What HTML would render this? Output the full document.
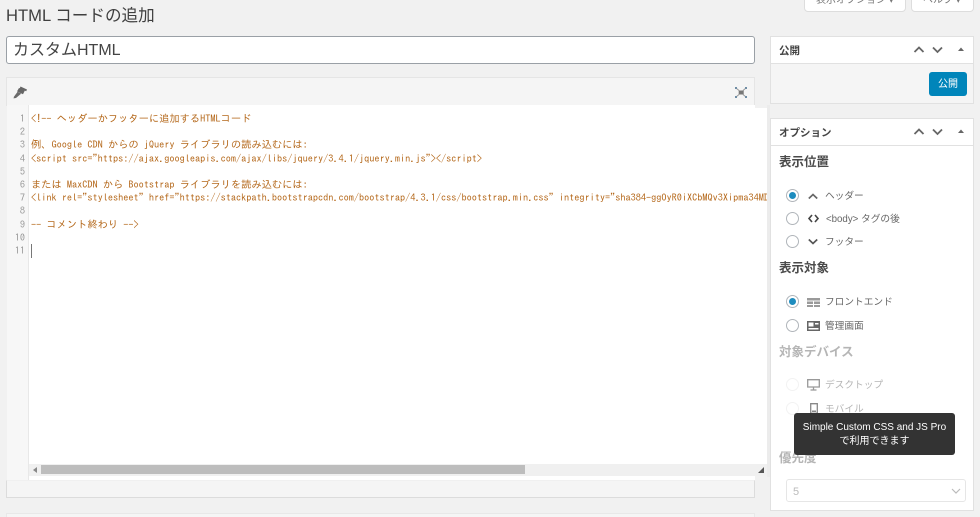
<!DOCTYPE html>
<html lang="ja">
<head>
<meta charset="utf-8">
<style>
html,body{margin:0;padding:0}
body{width:980px;height:517px;overflow:hidden;background:#f1f1f1;position:relative;font-family:"Liberation Sans","Noto Sans CJK JP",sans-serif;color:#444}
#w{position:absolute;left:0;top:0;width:980px;height:517px;overflow:hidden;background:#f1f1f1;filter:blur(.3px)}
.a{position:absolute;box-sizing:border-box;white-space:nowrap}
.code{position:absolute;left:31px;font:10.25px/13px IPAGothic,"Liberation Mono",monospace;color:#b5691c;white-space:pre}
.num{position:absolute;left:7px;width:18px;text-align:right;font:10.25px/13px IPAGothic,"Liberation Mono",monospace;color:#999}
.h{font-weight:bold;font-size:12.5px;color:#4a4a4a;line-height:18px}
.lab{font-size:9.7px;color:#666;line-height:14px}
.radio{position:absolute;box-sizing:border-box;width:13px;height:13px;border-radius:50%;border:1px solid #b0b5ba;background:#fff}
.radio.on:after{content:"";position:absolute;left:2px;top:2px;width:7px;height:7px;border-radius:50%;background:#1e8cbe}
svg{position:absolute;overflow:visible}
</style>
</head>
<body>
<div id="w">
<!-- top-right tabs -->
<div class="a" style="left:804px;top:-8px;width:102px;height:20px;background:#fff;border:1px solid #ddd;border-radius:0 0 4px 4px;font-size:10px;line-height:16px;color:#777;padding-left:11px">表示オプション ▾</div>
<div class="a" style="left:911px;top:-8px;width:63px;height:20px;background:#fff;border:1px solid #ddd;border-radius:0 0 4px 4px;font-size:10px;line-height:16px;color:#777;padding-left:11px">ヘルプ ▾</div>

<div class="a" style="left:6px;top:4px;font-size:16.6px;line-height:24px;color:#3f3f3f">HTML コードの追加</div>

<div class="a" style="left:6px;top:36px;width:749px;height:28px;background:#fff;border:1px solid #9aa0a6;border-radius:3px;font-size:16px;line-height:27px;padding-left:6px;color:#444">カスタムHTML</div>

<!-- editor toolbar -->
<div class="a" style="left:6px;top:77px;width:749px;height:29px;background:#f5f5f5;border:1px solid #e5e5e5"></div>
<svg style="left:13px;top:85px" width="14" height="14" viewBox="0 0 14 14"><path d="M7.5 1.5L14 4.5L13.2 6.2L11.8 5.6L10 9.2L4 6.4L6 3L6.8 3.2Z" fill="#666"/><path d="M4.6 6.8L8.2 8.6L3 13L0.5 13.4L1 11.6Z" fill="#6b6b6b"/></svg>
<svg style="left:735px;top:87px" width="12" height="11" viewBox="0 0 12 11"><rect x="3.7" y="3.5" width="5" height="4" fill="#777"/><path d="M1 1L4 3.5M11 1L8 3.5M1 10L4 7.5M11 10L8 7.5" stroke="#9a9a9a" stroke-width="1"/><rect x="0" y="0" width="2" height="2" fill="#6f8da5"/><rect x="10" y="0" width="2" height="2" fill="#6f8da5"/><rect x="0" y="9" width="2" height="2" fill="#6f8da5"/><rect x="10" y="9" width="2" height="2" fill="#6f8da5"/></svg>

<!-- editor -->
<div class="a" style="left:7px;top:105px;width:22px;height:375px;background:#f7f7f7;border-right:1px solid #e8e8e8"></div>
<div class="a" style="left:29px;top:105px;width:738px;height:371px;background:#fff"></div>
<div class="a" style="left:29px;top:476px;width:726px;height:4px;background:#fff"></div>
<div class="a" style="left:755px;top:105px;width:12px;height:3px;background:#f1f1f1"></div>
<div class="a" style="left:767px;top:105px;width:3px;height:372px;background:#ececec"></div>

<div class="num" style="top:113px">1</div><div class="num" style="top:126px">2</div><div class="num" style="top:139px">3</div><div class="num" style="top:153px">4</div><div class="num" style="top:166px">5</div><div class="num" style="top:179px">6</div><div class="num" style="top:192px">7</div><div class="num" style="top:205px">8</div><div class="num" style="top:219px">9</div><div class="num" style="top:232px">10</div><div class="num" style="top:245px">11</div>

<div class="a" style="left:29px;top:105px;width:738px;height:150px;overflow:hidden">
<div class="code" style="left:2px;top:8px">&lt;!-- ヘッダーかフッターに追加するHTMLコード</div>
<div class="code" style="left:2px;top:34px">例、Google CDN からの jQuery ライブラリの読み込むには:</div>
<div class="code" style="left:2px;top:48px">&lt;script src="https://ajax.googleapis.com/ajax/libs/jquery/3.4.1/jquery.min.js"&gt;&lt;/script&gt;</div>
<div class="code" style="left:2px;top:74px">または MaxCDN から Bootstrap ライブラリを読み込むには:</div>
<div class="code" style="left:2px;top:87px">&lt;link rel="stylesheet" href="https://stackpath.bootstrapcdn.com/bootstrap/4.3.1/css/bootstrap.min.css" integrity="sha384-ggOyR0iXCbMQv3Xipma34MD+dH/1fQ784/j6cY/iJTQUOhcWr7x9JvoRxT2MZw1T"</div>
<div class="code" style="left:2px;top:114px">-- コメント終わり --&gt;</div>
</div>
<div class="a" style="left:31px;top:244px;width:1.2px;height:14px;background:#777"></div>

<!-- scrollbar -->
<div class="a" style="left:29px;top:464px;width:738px;height:12px;background:#f0f0f0"></div>
<div class="a" style="left:41px;top:465px;width:484px;height:9px;background:#bdbdbd"></div>
<svg style="left:33px;top:467px" width="4" height="6" viewBox="0 0 4 6"><path d="M4 0L0 3L4 6Z" fill="#888"/></svg>
<svg style="left:758px;top:467px" width="6" height="6" viewBox="0 0 6 6"><path d="M6 0V6H0Z" fill="#555"/></svg>

<!-- editor footer -->
<div class="a" style="left:6px;top:480px;width:749px;height:18px;background:#f5f5f5;border:1px solid #dcdcdc;border-top-color:#f0f0f0"></div>
<!-- next box -->
<div class="a" style="left:6px;top:513px;width:749px;height:10px;background:#f5f5f5;border:1px solid #e8e8e8"></div>

<!-- publish box -->
<div class="a" style="left:770px;top:36px;width:204px;height:68px;background:#f5f5f5;border:1px solid #e1e1e1"></div>
<div class="a" style="left:771px;top:37px;width:202px;height:27px;background:#fff;border-bottom:1px solid #e1e1e1"></div>
<div class="a" style="left:779px;top:43px;font-size:10.5px;font-weight:bold;line-height:16px;color:#444">公開</div>
<svg style="left:914px;top:46px" width="60" height="8" viewBox="0 0 60 8"><path d="M0.5 6L5 1.5L9.5 6M19 1.5L23.5 6L28 1.5" fill="none" stroke="#666" stroke-width="1.8"/><path d="M44 5L47 1.5L50 5Z" fill="#666"/></svg>
<div class="a" style="left:929px;top:72px;width:38px;height:24px;background:#0085ba;border-radius:3px;color:#fff;font-size:10px;line-height:25px;text-align:center">公開</div>

<!-- options box -->
<div class="a" style="left:770px;top:118px;width:204px;height:393px;background:#fff;border:1px solid #e1e1e1"></div>
<div class="a" style="left:771px;top:145px;width:202px;height:1px;background:#e1e1e1"></div>
<div class="a" style="left:779px;top:125px;font-size:10.5px;font-weight:bold;line-height:16px;color:#444">オプション</div>
<svg style="left:914px;top:128px" width="60" height="8" viewBox="0 0 60 8"><path d="M0.5 6L5 1.5L9.5 6M19 1.5L23.5 6L28 1.5" fill="none" stroke="#666" stroke-width="1.8"/><path d="M44 5L47 1.5L50 5Z" fill="#666"/></svg>

<div class="a h" style="left:779px;top:153px">表示位置</div>
<div class="radio on" style="left:786px;top:189px"></div>
<svg style="left:808px;top:193px" width="10" height="7" viewBox="0 0 10 7"><path d="M0.8 5.5L5 1.5L9.2 5.5" fill="none" stroke="#666" stroke-width="1.7"/></svg>
<div class="a lab" style="left:825px;top:190px">ヘッダー</div>

<div class="radio" style="left:786px;top:212px"></div>
<svg style="left:808px;top:214px" width="11" height="9" viewBox="0 0 11 9"><path d="M4 1L1 4.5L4 8M7 1L10 4.5L7 8" fill="none" stroke="#444" stroke-width="1.6"/></svg>
<div class="a lab" style="left:826px;top:213px">&lt;body&gt; タグの後</div>

<div class="radio" style="left:786px;top:235px"></div>
<svg style="left:808px;top:238px" width="10" height="7" viewBox="0 0 10 7"><path d="M0.8 1.5L5 5.5L9.2 1.5" fill="none" stroke="#555" stroke-width="1.7"/></svg>
<div class="a lab" style="left:825px;top:236px">フッター</div>

<div class="a h" style="left:779px;top:259px">表示対象</div>
<div class="radio on" style="left:786px;top:295px"></div>
<svg style="left:807px;top:298px" width="13" height="9" viewBox="0 0 13 9"><path d="M0 0H13V2.5H0ZM0 3.5H6V6H0ZM7 3.5H13V6H7ZM0 7H6V9H0ZM7 7H13V9H7Z" fill="#9a9a9a"/></svg>
<div class="a lab" style="left:825px;top:296px">フロントエンド</div>

<div class="radio" style="left:786px;top:319px"></div>
<svg style="left:807px;top:321px" width="13" height="10" viewBox="0 0 13 10"><path d="M0 0H13V10H0ZM1.5 1.5V5.5H6.5V1.5ZM8 2V3.5H11.5V2ZM1.5 7V8.5H11.5V7Z" fill="#666" fill-rule="evenodd"/></svg>
<div class="a lab" style="left:825px;top:320px">管理画面</div>

<div class="a h" style="left:779px;top:343px;color:#b5b5b5">対象デバイス</div>
<div class="radio" style="left:786px;top:378px;border-color:#f2f2f2"></div>
<svg style="left:807px;top:379px" width="13" height="12" viewBox="0 0 13 12"><path d="M0.7 0.7H12.3V8H0.7ZM6.5 8V10.5M3.5 11H9.5" fill="none" stroke="#999" stroke-width="1.3"/></svg>
<div class="a lab" style="left:825px;top:379px;color:#b5b5b5">デスクトップ</div>
<div class="radio" style="left:786px;top:402px;border-color:#f2f2f2"></div>
<svg style="left:810px;top:403px" width="8" height="11" viewBox="0 0 8 11"><path d="M0.7 0.7H7.3V10.3H0.7Z" fill="none" stroke="#888" stroke-width="1.3"/><path d="M2 7.5H6V9H2Z" fill="#888"/></svg>
<div class="a lab" style="left:825px;top:403px;color:#b5b5b5">モバイル</div>

<div class="a h" style="left:779px;top:449px;color:#b5b5b5">優先度</div>
<div class="a" style="left:786px;top:479px;width:180px;height:23px;background:#fff;border:1px solid #e6e6e6;border-radius:3px;font-size:11px;line-height:25px;color:#bbb;padding-left:6px">5</div>
<svg style="left:951px;top:488px" width="10" height="6" viewBox="0 0 10 6"><path d="M1 1L5 5L9 1" fill="none" stroke="#bbb" stroke-width="1.2"/></svg>

<!-- tooltip -->
<div class="a" style="left:794px;top:413px;width:161px;height:42px;background:#333;border-radius:3px;color:#fff;font-size:10px;line-height:14px;text-align:center;padding-top:8px">Simple Custom CSS and JS Pro<br>で利用できます</div>
</div>
</body>
</html>
